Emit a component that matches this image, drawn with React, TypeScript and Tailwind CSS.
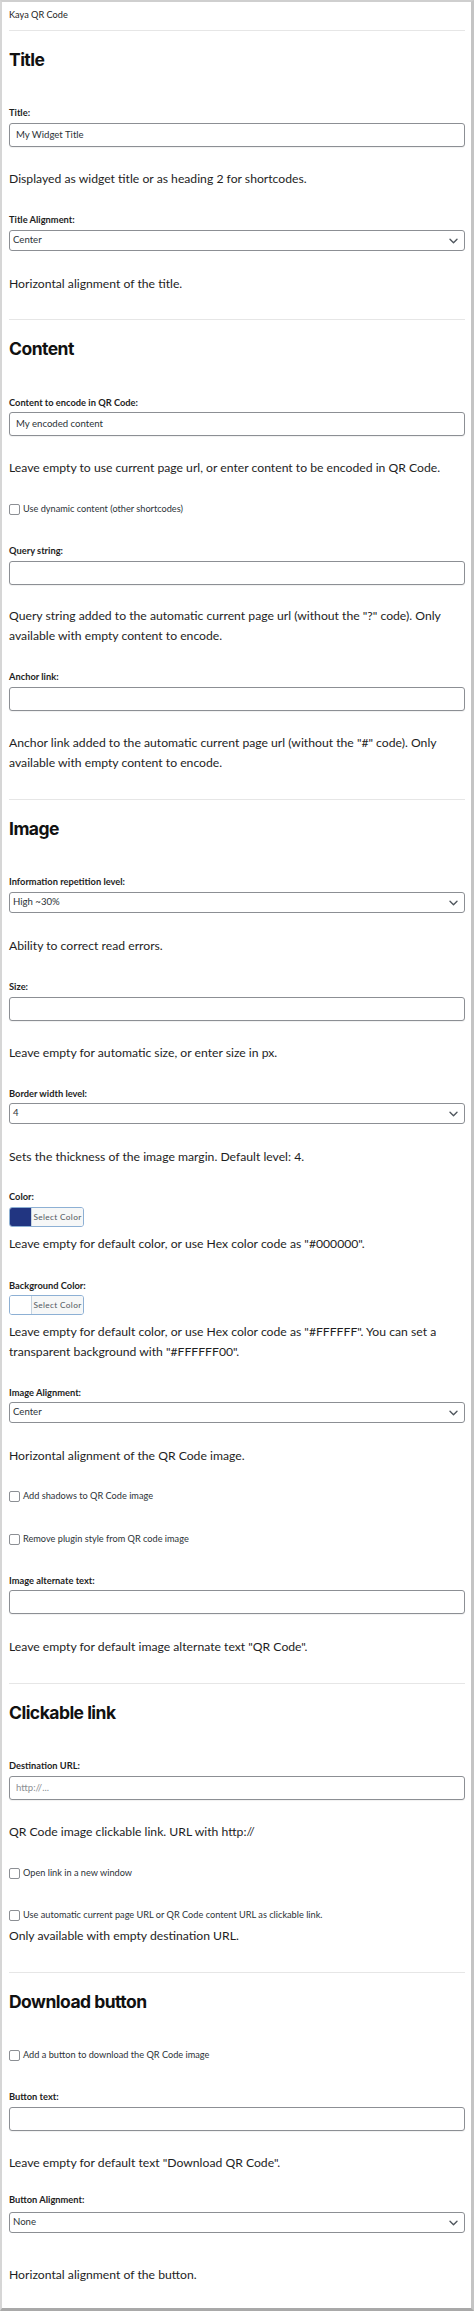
import React from "react";

const sans = { fontFamily: 'Lato, "Noto Sans", sans-serif' };

function Label({ children, className = "" }: { children: React.ReactNode; className?: string }) {
  return (
    <div className={`h-[14px] text-[9.3px] leading-[14px] font-bold text-[#1e1e1e] whitespace-nowrap ${className}`}>
      {children}
    </div>
  );
}

function TextInput({ value = "", placeholder = "", className = "" }: { value?: string; placeholder?: string; className?: string }) {
  return (
    <div
      className={`h-[24px] w-full rounded-[3px] border border-[#8c8f94] bg-white pl-[6px] flex items-center text-[9.6px] text-[#2c3338] shadow-[0_1px_1px_rgba(0,0,0,0.06)] ${className}`}
    >
      {value ? <span>{value}</span> : <span className="text-[#8c8f94]">{placeholder}</span>}
    </div>
  );
}

function Select({ value, className = "" }: { value: string; className?: string }) {
  return (
    <div
      className={`h-[21px] w-full rounded-[3px] border border-[#8c8f94] bg-white pl-[3px] pr-[6px] flex items-center justify-between text-[9.6px] text-[#2c3338] ${className}`}
    >
      <span>{value}</span>
      <svg width="9" height="6" viewBox="0 0 9 6" fill="none">
        <path d="M1 1.2l3.5 3.5L8 1.2" stroke="#50575e" strokeWidth="1.4" strokeLinecap="round" strokeLinejoin="round" />
      </svg>
    </div>
  );
}

function Desc({ children, className = "" }: { children: React.ReactNode; className?: string }) {
  return <p className={`text-[12.2px] leading-[20px] text-[#1e1e1e] ${className}`}>{children}</p>;
}

function Check({ children, className = "" }: { children: React.ReactNode; className?: string }) {
  return (
    <div className={`h-[14px] flex items-center gap-[3px] text-[9.2px] text-[#2c3338] whitespace-nowrap ${className}`}>
      <span className="h-[11px] w-[11px] rounded-[2px] border border-[#8c8f94] bg-white shrink-0" />
      <span>{children}</span>
    </div>
  );
}

function Sep({ className = "" }: { className?: string }) {
  return <div className={`h-px bg-[#e6e6e6] ${className}`} />;
}

function Heading({ children, className = "" }: { children: React.ReactNode; className?: string }) {
  return (
    <h2
      className={`h-[28px] text-[17.5px] leading-[28px] font-bold text-[#111] tracking-[-0.03em] ${className}`}
      style={{ fontFamily: 'Inter, "Liberation Sans", sans-serif' }}
    >
      {children}
    </h2>
  );
}

function ColorButton({ swatch, className = "" }: { swatch: string; className?: string }) {
  return (
    <div className={`h-[20px] w-[75px] flex rounded-[3px] border border-[#8db0d4] overflow-hidden ${className}`}>
      <span className="w-[22px] h-full border-r border-[#c5d3e0]" style={{ background: swatch }} />
      <span className="flex-1 bg-[#f6f7f7] flex items-center justify-center text-[8.3px] text-[#50575e] tracking-[0.04em]">
        Select Color
      </span>
    </div>
  );
}

export default function App() {
  return (
    <div
      className="h-[2311px] w-[474px] bg-white border-t-2 border-l-2 border-r-[3px] border-b-[3px] border-t-[#cfcfcf] border-l-[#d6d6d6] border-r-[#c4c4c4] border-b-[#a9a9a9] pl-[7px] pr-[6px] pt-[5px] flex flex-col"
      style={sans}
    >
      <div className="h-[16px] text-[9.2px] leading-[16px] text-[#1e1e1e]">Kaya QR Code</div>
      <Sep className="mt-[7px]" />

      {/* Title */}
      <Heading className="mt-[15px]">Title</Heading>
      <Label className="mt-[32px]">Title:</Label>
      <TextInput className="mt-[3px]" value="My Widget Title" />
      <Desc className="mt-[22px]">Displayed as widget title or as heading 2 for shortcodes.</Desc>
      <Label className="mt-[24px]">Title Alignment:</Label>
      <Select className="mt-[3px]" value="Center" />
      <Desc className="mt-[23px]">Horizontal alignment of the title.</Desc>
      <Sep className="mt-[25px]" />

      {/* Content */}
      <Heading className="mt-[15px]">Content</Heading>
      <Label className="mt-[33px]">Content to encode in QR Code:</Label>
      <TextInput className="mt-[2px]" value="My encoded content" />
      <Desc className="mt-[22px]">Leave empty to use current page url, or enter content to be encoded in QR Code.</Desc>
      <Check className="mt-[24px]">Use dynamic content (other shortcodes)</Check>
      <Label className="mt-[28px]">Query string:</Label>
      <TextInput className="mt-[3px]" />
      <Desc className="mt-[21px]">
        Query string added to the automatic current page url (without the "?" code). Only available with empty content to
        encode.
      </Desc>
      <Label className="mt-[24px]">Anchor link:</Label>
      <TextInput className="mt-[3px]" />
      <Desc className="mt-[22px]">
        Anchor link added to the automatic current page url (without the "#" code). Only available with empty content to
        encode.
      </Desc>
      <Sep className="mt-[26px]" />

      {/* Image */}
      <Heading className="mt-[15px]">Image</Heading>
      <Label className="mt-[32px]">Information repetition level:</Label>
      <Select className="mt-[3px]" value="High ~30%" />
      <Desc className="mt-[23px]">Ability to correct read errors.</Desc>
      <Label className="mt-[24px]">Size:</Label>
      <TextInput className="mt-[3px]" />
      <Desc className="mt-[22px]">Leave empty for automatic size, or enter size in px.</Desc>
      <Label className="mt-[24px]">Border width level:</Label>
      <Select className="mt-[2px]" value="4" />
      <Desc className="mt-[23px]">Sets the thickness of the image margin. Default level: 4.</Desc>
      <Label className="mt-[23px]">Color:</Label>
      <ColorButton className="mt-[3px]" swatch="#213581" />
      <Desc className="mt-[7px]">Leave empty for default color, or use Hex color code as "#000000".</Desc>
      <Label className="mt-[25px]">Background Color:</Label>
      <ColorButton className="mt-[2px]" swatch="#ffffff" />
      <Desc className="mt-[7px]">
        Leave empty for default color, or use Hex color code as "#FFFFFF". You can set a transparent background with
        "#FFFFFF00".
      </Desc>
      <Label className="mt-[24px]">Image Alignment:</Label>
      <Select className="mt-[2px]" value="Center" />
      <Desc className="mt-[23px]">Horizontal alignment of the QR Code image.</Desc>
      <Check className="mt-[23px]">Add shadows to QR Code image</Check>
      <Check className="mt-[29px]">Remove plugin style from QR code image</Check>
      <Label className="mt-[28px]">Image alternate text:</Label>
      <TextInput className="mt-[2px]" />
      <Desc className="mt-[23px]">Leave empty for default image alternate text "QR Code".</Desc>
      <Sep className="mt-[26px]" />

      {/* Clickable link */}
      <Heading className="mt-[15px]">Clickable link</Heading>
      <Label className="mt-[32px]">Destination URL:</Label>
      <TextInput className="mt-[3px]" placeholder="http://..." />
      <Desc className="mt-[22px]">QR Code image clickable link. URL with http://</Desc>
      <Check className="mt-[24px]">Open link in a new window</Check>
      <Check className="mt-[28px]">Use automatic current page URL or QR Code content URL as clickable link.</Check>
      <Desc className="mt-[4px]">Only available with empty destination URL.</Desc>
      <Sep className="mt-[26px]" />

      {/* Download button */}
      <Heading className="mt-[15px]">Download button</Heading>
      <Check className="mt-[32px]">Add a button to download the QR Code image</Check>
      <Label className="mt-[28px]">Button text:</Label>
      <TextInput className="mt-[3px]" />
      <Desc className="mt-[22px]">Leave empty for default text "Download QR Code".</Desc>
      <Label className="mt-[20px]">Button Alignment:</Label>
      <Select className="mt-[5px]" value="None" />
      <Desc className="mt-[32px]">Horizontal alignment of the button.</Desc>
    </div>
  );
}
